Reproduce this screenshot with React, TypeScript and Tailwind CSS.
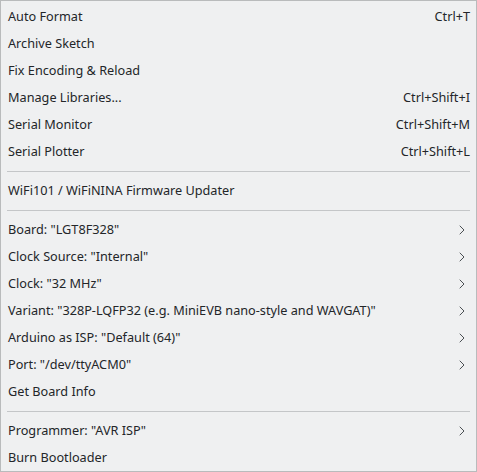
import { ChevronRight } from 'lucide-react';

type Item =
  | { kind: 'sep' }
  | { kind: 'item'; label: string; shortcut?: string; sub?: boolean };

const items: Item[] = [
  { kind: 'item', label: 'Auto Format', shortcut: 'Ctrl+T' },
  { kind: 'item', label: 'Archive Sketch' },
  { kind: 'item', label: 'Fix Encoding & Reload' },
  { kind: 'item', label: 'Manage Libraries...', shortcut: 'Ctrl+Shift+I' },
  { kind: 'item', label: 'Serial Monitor', shortcut: 'Ctrl+Shift+M' },
  { kind: 'item', label: 'Serial Plotter', shortcut: 'Ctrl+Shift+L' },
  { kind: 'sep' },
  { kind: 'item', label: 'WiFi101 / WiFiNINA Firmware Updater' },
  { kind: 'sep' },
  { kind: 'item', label: 'Board: "LGT8F328"', sub: true },
  { kind: 'item', label: 'Clock Source: "Internal"', sub: true },
  { kind: 'item', label: 'Clock: "32 MHz"', sub: true },
  { kind: 'item', label: 'Variant: "328P-LQFP32 (e.g. MiniEVB nano-style and WAVGAT)"', sub: true },
  { kind: 'item', label: 'Arduino as ISP: "Default (64)"', sub: true },
  { kind: 'item', label: 'Port: "/dev/ttyACM0"', sub: true },
  { kind: 'item', label: 'Get Board Info' },
  { kind: 'sep' },
  { kind: 'item', label: 'Programmer: "AVR ISP"', sub: true },
  { kind: 'item', label: 'Burn Bootloader' },
];

export default function App() {
  return (
    <div
      className="w-[477px] h-[472px] bg-[#eff0f1] border border-[#b9bbbc] text-[#232629] text-[12.7px] flex flex-col pt-[2px]"
      style={{ fontFamily: '"Noto Sans", "Open Sans", sans-serif' }}
    >
      {items.map((it, i) =>
        it.kind === 'sep' ? (
          <div key={i} className="h-[12px] flex items-center px-[6px]">
            <div className="h-px w-full bg-[#c4c6c8]" />
          </div>
        ) : (
          <div key={i} className="h-[27px] flex items-center justify-between pl-[7px] pr-[6px]">
            <span>{it.label}</span>
            {it.shortcut && <span>{it.shortcut}</span>}
            {it.sub && <ChevronRight className="w-[16px] h-[16px] text-[#31363b]" strokeWidth={1.3} />}
          </div>
        )
      )}
    </div>
  );
}
